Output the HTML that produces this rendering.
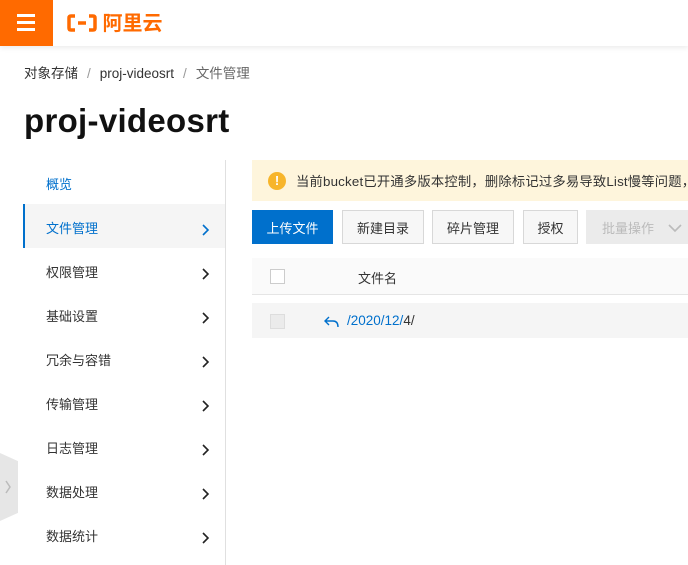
<!DOCTYPE html>
<html><head><meta charset="utf-8"><style>
*{margin:0;padding:0;box-sizing:border-box}
body{width:688px;height:565px;overflow:hidden;background:#fff;font-family:"Liberation Sans","Noto Sans CJK SC",sans-serif;color:#333;position:relative}
.abs{position:absolute}
.hdr{left:0;top:0;width:688px;height:46px;background:#fff;box-shadow:0 2px 5px rgba(0,0,0,.08)}
.burger{left:0;top:0;width:53px;height:46px;background:#ff6a00}
.burger i{position:absolute;left:17px;width:18px;height:3px;background:#fff}
.logo{left:67px;top:7px;color:#ff6a00;font-weight:bold;font-size:20px}
.bc{left:24px;top:62px;font-size:13.5px;color:#333}
.bc span{color:#999;margin:0 9px}
h1{position:absolute;left:24px;top:102px;font-size:33px;font-weight:bold;color:#111;letter-spacing:0.3px}
.side{left:23px;top:163px;width:202px}
.item{height:44px;line-height:44px;padding-left:23px;font-size:13px;color:#333;position:relative}
.item.first{color:#0070cc}
.item svg{position:absolute;left:179px;top:17px}
.actbg{left:23px;top:204px;width:202px;height:44px;background:#f5f5f5;border-left:2px solid #0070cc}
.div{left:225px;top:160px;width:1px;height:405px;background:#e0e0e0}
.tab{left:0;top:453px;width:18px;height:68px;background:#e6e6e6;clip-path:polygon(0 0,100% 12%,100% 88%,0 100%)}
.notice{left:252px;top:160px;width:436px;height:41px;background:#fef5dc;font-size:13.3px;line-height:43px;padding-left:44px;white-space:nowrap;color:#333;letter-spacing:0.2px;overflow:hidden}
.warn{left:268px;top:172px;width:18px;height:18px;border-radius:50%;background:#f7b52b;color:#fff;font-size:13px;font-weight:bold;text-align:center;line-height:18px}
.btn{top:210px;height:34px;line-height:36px;font-size:13px;text-align:center;border:1px solid #d8d8d8;background:#f7f7f7;color:#333}
.th{left:252px;top:258px;width:436px;height:37px;background:#fafafa;border-bottom:1px solid #e5e5e5}
.cb{width:15px;height:15px;border:1px solid #ccc;background:#fff}
.row{left:252px;top:303px;width:436px;height:35px;background:#f5f5f5}
</style></head><body>
<div class="abs hdr"></div>
<div class="abs burger"><i style="top:14px"></i><i style="top:21px"></i><i style="top:28px"></i></div>
<div class="abs logo"><svg width="30" height="18" viewBox="0 0 30 18" style="vertical-align:-2px"><path d="M8 2H4Q2 2 2 4V14Q2 16 4 16H8M22 2H26Q28 2 28 4V14Q28 16 26 16H22M11 9H19" fill="none" stroke="#ff6a00" stroke-width="3.5"/></svg> 阿里云</div>
<div class="abs bc">对象存储<span>/</span>proj-videosrt<span>/</span><b style="font-weight:normal;color:#666">文件管理</b></div>
<h1>proj-videosrt</h1>
<div class="abs actbg"></div>
<div class="abs side">
<div class="item first">概览</div>
<div class="item" style="color:#0070cc">文件管理<svg width="8" height="12" viewBox="0 0 8 12"><path d="M1 1L6 6L1 11" fill="none" stroke="#0070cc" stroke-width="1.6"/></svg></div>
<div class="item">权限管理<svg width="8" height="12" viewBox="0 0 8 12"><path d="M1 1L6 6L1 11" fill="none" stroke="#222" stroke-width="1.6"/></svg></div>
<div class="item">基础设置<svg width="8" height="12" viewBox="0 0 8 12"><path d="M1 1L6 6L1 11" fill="none" stroke="#222" stroke-width="1.6"/></svg></div>
<div class="item">冗余与容错<svg width="8" height="12" viewBox="0 0 8 12"><path d="M1 1L6 6L1 11" fill="none" stroke="#222" stroke-width="1.6"/></svg></div>
<div class="item">传输管理<svg width="8" height="12" viewBox="0 0 8 12"><path d="M1 1L6 6L1 11" fill="none" stroke="#222" stroke-width="1.6"/></svg></div>
<div class="item">日志管理<svg width="8" height="12" viewBox="0 0 8 12"><path d="M1 1L6 6L1 11" fill="none" stroke="#222" stroke-width="1.6"/></svg></div>
<div class="item">数据处理<svg width="8" height="12" viewBox="0 0 8 12"><path d="M1 1L6 6L1 11" fill="none" stroke="#222" stroke-width="1.6"/></svg></div>
<div class="item">数据统计<svg width="8" height="12" viewBox="0 0 8 12"><path d="M1 1L6 6L1 11" fill="none" stroke="#222" stroke-width="1.6"/></svg></div>
</div>
<div class="abs div"></div>
<div class="abs tab"><svg width="18" height="68" viewBox="0 0 18 68"><path d="M6 28L10 34L6 40" fill="none" stroke="#bbb" stroke-width="1.5"/></svg></div>
<div class="abs notice">当前bucket已开通多版本控制，删除标记过多易导致List慢等问题，</div>
<div class="abs warn">!</div>
<div class="abs btn" style="left:252px;width:81px;background:#0070cc;border-color:#0070cc;color:#fff">上传文件</div>
<div class="abs btn" style="left:342px;width:82px">新建目录</div>
<div class="abs btn" style="left:432px;width:82px">碎片管理</div>
<div class="abs btn" style="left:523px;width:55px">授权</div>
<div class="abs btn" style="left:586px;width:102px;background:#ebebeb;border-color:#ebebeb;color:#bbb;text-align:left;padding-left:15px">批量操作 <svg width="14" height="9" viewBox="0 0 14 9" style="margin-left:10px"><path d="M1 1L7 7L13 1" fill="none" stroke="#bbb" stroke-width="1.6"/></svg></div>
<div class="abs th"><div class="abs cb" style="left:18px;top:11px"></div><div class="abs" style="left:106px;top:10px;font-size:13px">文件名</div></div>
<div class="abs row"><div class="abs cb" style="left:18px;top:11px;background:#ebebeb;border-color:#ddd"></div>
<svg class="abs" style="left:72px;top:13px" width="16" height="12" viewBox="0 0 16 12"><path d="M5 1L1 5L5 9M1 5H9Q14 5 14 11" fill="none" stroke="#0070cc" stroke-width="1.4"/></svg>
<div class="abs" style="left:95px;top:10px;font-size:13.5px;color:#0070cc">/2020/12/<span style="color:#333">4/</span></div></div>
</body></html>
